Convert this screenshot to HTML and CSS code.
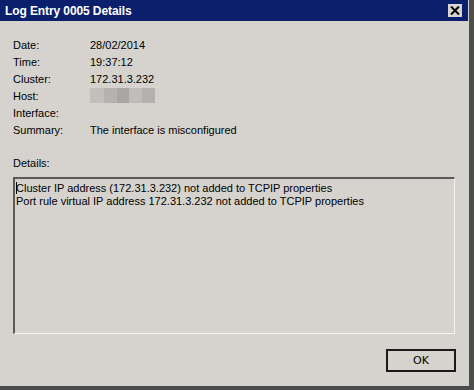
FILE: index.html
```html
<!DOCTYPE html>
<html>
<head>
<meta charset="utf-8">
<link rel="stylesheet" href="styles.css">
</head>
<body>
<div class="window">
  <div class="titlebar">
    <span class="title">Log Entry 0005 Details</span>
    <span class="close">
      <svg width="10" height="9" viewBox="0 0 10 9"><path d="M1 0.5 L9 8.5 M9 0.5 L1 8.5" stroke="#000" stroke-width="2"/></svg>
    </span>
  </div>
  <div class="content">
    <div class="info">
      <span class="lbl">Date:</span><span class="val">28/02/2014</span>
      <span class="lbl">Time:</span><span class="val">19:37:12</span>
      <span class="lbl">Cluster:</span><span class="val">172.31.3.232</span>
      <span class="lbl">Host:</span><span class="val"><span class="blur"><i class="b1"></i><i class="b2"></i><i class="b3"></i><i class="b4"></i><i class="b5"></i></span></span>
      <span class="lbl">Interface:</span><span class="val"></span>
      <span class="lbl">Summary:</span><span class="val">The interface is misconfigured</span>
    </div>
    <div class="details-label">Details:</div>
    <div class="details">
      <div class="line"><span class="caret"></span>Cluster IP address (172.31.3.232) not added to TCPIP properties</div>
      <div class="line">Port rule virtual IP address 172.31.3.232 not added to TCPIP properties</div>
    </div>
    <div class="buttons">
      <button class="ok">OK</button>
    </div>
  </div>
</div>
</body>
</html>
```

FILE: styles.css
```css
html, body {
  margin: 0;
  padding: 0;
  background: #d4d0c8;
}
.window {
  width: 474px;
  height: 390px;
  box-sizing: border-box;
  background: #d6d3ce;
  border-right: 5px solid #4d4d4d;
  border-bottom: 4px solid #4d4d4d;
  display: flex;
  flex-direction: column;
  font-family: "Liberation Sans", Arial, sans-serif;
  font-size: 11px;
  color: #000;
}
.titlebar {
  height: 21px;
  margin-right: 1px;
  background: #0b1f6c;
  display: flex;
  align-items: center;
  justify-content: space-between;
  padding: 0 6px 0 5px;
}
.title {
  color: #fff;
  font-family: "Liberation Sans", Arial, sans-serif;
  font-weight: bold;
  font-size: 12px;
  letter-spacing: -0.1px;
}
.close {
  width: 14px;
  height: 13px;
  background: #d8d5d0;
  display: flex;
  align-items: center;
  justify-content: center;
}
.content {
  flex: 1;
  padding: 0 14px 0 13px;
  display: flex;
  flex-direction: column;
}
.info {
  margin-top: 15px;
  display: grid;
  grid-template-columns: 77px auto;
  grid-auto-rows: 17px;
  align-items: center;
}
.blur {
  display: flex;
  height: 15px;
  width: 65px;
}
.blur i { display: block; height: 100%; }
.b1 { width: 14px; background: #c2c0bd; }
.b2 { width: 13px; background: #b5b3b0; }
.b3 { width: 12px; background: #a9a7a4; }
.b4 { width: 13px; background: #c0bebb; }
.b5 { width: 13px; background: #b4b2af; }
.details-label {
  margin-top: 17px;
  height: 17px;
  line-height: 17px;
}
.details {
  margin-top: 5px;
  height: 157px;
  box-sizing: border-box;
  border-top: 2px solid #5a5a5a;
  border-left: 2px solid #5a5a5a;
  border-right: 1px solid #f4f3f1;
  border-bottom: 1px solid #f4f3f1;
  padding: 3px 1px;
  font-family: "Liberation Sans", Arial, sans-serif;
  font-size: 11px;
  line-height: 13px;
}
.caret {
  display: inline-block;
  width: 1px;
  height: 12px;
  background: #000;
  vertical-align: -2px;
  margin-right: -1px;
}
.buttons {
  margin-top: 15px;
  display: flex;
  justify-content: flex-end;
  margin-right: -1px;
}
.ok {
  width: 70px;
  height: 23px;
  box-sizing: border-box;
  background: #d6d3ce;
  border: 2px solid #1a1a1a;
  border-radius: 0;
  font-family: "DejaVu Sans", sans-serif;
  font-size: 11px;
  color: #000;
  padding: 0;
}
```
